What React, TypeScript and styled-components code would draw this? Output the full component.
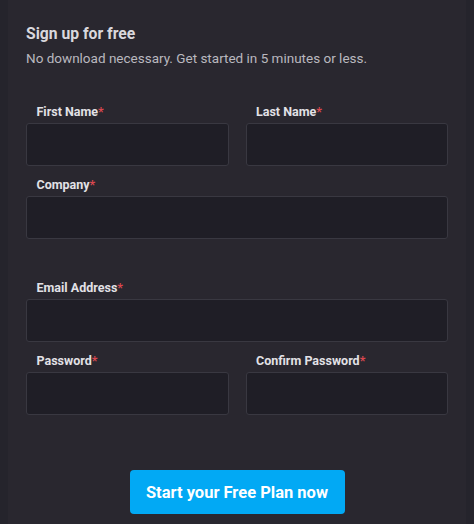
import React from 'react';
import styled, { createGlobalStyle } from 'styled-components';

const GlobalStyle = createGlobalStyle`
  html, body {
    margin: 0;
    padding: 0;
    background: #25242c;
  }
  * {
    box-sizing: border-box;
  }
`;

const Page = styled.div`
  min-height: 524px;
  padding: 0 8px;
  font-family: Roboto, 'Liberation Sans', sans-serif;
`;

const Panel = styled.form`
  background: #29272f;
  min-height: 524px;
  padding: 24px 18px 9px;
  display: flex;
  flex-direction: column;
`;

const Title = styled.h2`
  margin: 0;
  font-size: 15.7px;
  line-height: 20px;
  font-weight: 700;
  color: #d9d8dd;
`;

const Subtitle = styled.p`
  margin: 5px 0 0;
  font-size: 13.5px;
  line-height: 18px;
  font-weight: 400;
  color: #b9b8bf;
`;

const Fields = styled.div`
  margin-top: 37px;
  display: flex;
  flex-direction: column;
  gap: 11px;
`;

const Row = styled.div<{ $cols?: number }>`
  display: grid;
  grid-template-columns: repeat(${(p) => p.$cols ?? 1}, 1fr);
  column-gap: 17px;
`;

const Spacer = styled.div`
  height: 19px;
`;

const Field = styled.label`
  display: flex;
  flex-direction: column;
`;

const LabelText = styled.span`
  padding-left: 10.5px;
  font-size: 12.5px;
  line-height: 16px;
  font-weight: 700;
  color: #e2e1e6;
`;

const Req = styled.span`
  color: #d9474f;
`;

const Input = styled.input`
  margin-top: 3px;
  height: 43px;
  width: 100%;
  background: #1f1e26;
  border: 1.5px solid #393841;
  border-radius: 3px;
  outline: none;
  color: #e2e1e6;
  font: inherit;
  padding: 0 10px;
`;

const Footer = styled.div`
  margin-top: 55px;
  display: flex;
  justify-content: center;
`;

const Submit = styled.button`
  width: 215px;
  height: 44px;
  border: none;
  border-radius: 4px;
  background: #02a9f4;
  color: #ffffff;
  font-family: Roboto, 'Liberation Sans', sans-serif;
  font-size: 16.5px;
  font-weight: 700;
  cursor: pointer;
`;

type FieldDef = { label: string; type?: string };

const TextField: React.FC<FieldDef> = ({ label, type = 'text' }) => (
  <Field>
    <LabelText>
      {label}
      <Req>*</Req>
    </LabelText>
    <Input type={type} />
  </Field>
);

const App: React.FC = () => {
  return (
    <>
      <GlobalStyle />
      <Page>
        <Panel onSubmit={(e) => e.preventDefault()}>
          <Title>Sign up for free</Title>
          <Subtitle>No download necessary. Get started in 5 minutes or less.</Subtitle>

          <Fields>
            <Row $cols={2}>
              <TextField label="First Name" />
              <TextField label="Last Name" />
            </Row>
            <Row>
              <TextField label="Company" />
            </Row>
            <Spacer />
            <Row>
              <TextField label="Email Address" type="email" />
            </Row>
            <Row $cols={2}>
              <TextField label="Password" type="password" />
              <TextField label="Confirm Password" type="password" />
            </Row>
          </Fields>

          <Footer>
            <Submit type="submit">Start your Free Plan now</Submit>
          </Footer>
        </Panel>
      </Page>
    </>
  );
};

export default App;
